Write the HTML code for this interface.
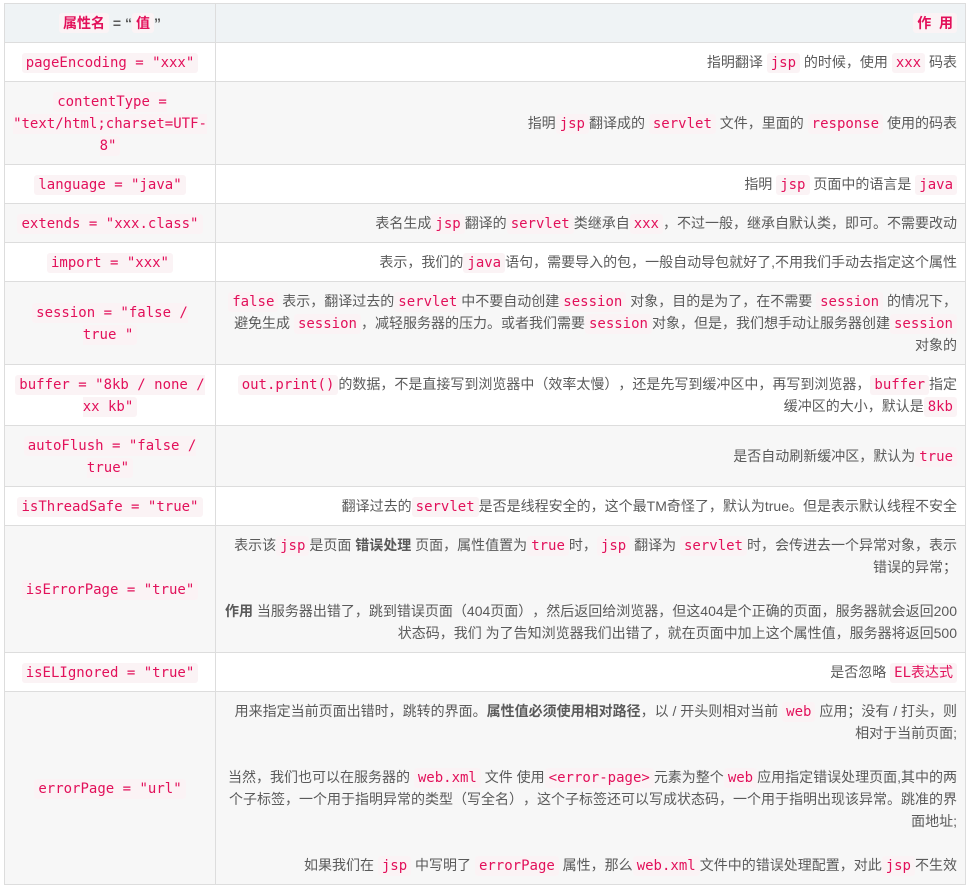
<!DOCTYPE html>
<html><head><meta charset="utf-8">
<style>
html,body{margin:0;padding:0;background:#fff;width:970px;height:887px;overflow:hidden}
body{font-family:"Liberation Sans","Noto Sans CJK SC",sans-serif;font-size:14px;line-height:22px;color:#5a5a5a;text-spacing-trim:space-all}
table{position:absolute;left:4px;top:3px;width:962px;border-collapse:collapse;table-layout:fixed}
td,th{border:1px solid #ddd;padding:8px 8px;text-align:right;font-weight:400;vertical-align:middle}
col.a{width:211px}
td:first-child,th:first-child{text-align:center;padding:8px 6px}
tr:nth-child(even) td{background:#f7f7f7}
th{background:#eff3f5;font-weight:bold}
code{font-family:"DejaVu Sans Mono","Liberation Mono","Noto Sans CJK SC",monospace;font-size:14px;line-height:0;color:#e2105a;background:#fbf3f5;padding:2px 4px;border-radius:3px}
th code{font-family:"Liberation Sans","Noto Sans CJK SC",sans-serif;font-weight:bold}
b{font-weight:bold}
</style></head><body>
<table>
<colgroup><col class="a"><col></colgroup>
<thead><tr><th><code>属性名</code> = “<code>值</code>”</th><th><code>作&nbsp;&nbsp;用</code></th></tr></thead>
<tbody>
<tr><td><code>pageEncoding = "xxx"</code></td><td>指明翻译 <code>jsp</code> 的时候，使用 <code>xxx</code> 码表</td></tr>
<tr><td><code>contentType =<br>"text/html;charset=UTF-<br>8"</code></td><td>指明<code>jsp</code>翻译成的 <code>servlet</code> 文件，里面的 <code>response</code> 使用的码表</td></tr>
<tr><td><code>language = "java"</code></td><td>指明 <code>jsp</code> 页面中的语言是 <code>java</code></td></tr>
<tr><td><code>extends = "xxx.class"</code></td><td>表名生成<code>jsp</code>翻译的<code>servlet</code>类继承自<code>xxx</code>，不过一般，继承自默认类，即可。不需要改动</td></tr>
<tr><td><code>import = "xxx"</code></td><td>表示，我们的<code>java</code>语句，需要导入的包，一般自动导包就好了,不用我们手动去指定这个属性</td></tr>
<tr><td><code>session = "false /<br>true "</code></td><td><code>false</code> 表示，翻译过去的<code>servlet</code>中不要自动创建<code>session</code> 对象，目的是为了，在不需要 <code>session</code> 的情况下，<br>避免生成 <code>session</code>，减轻服务器的压力。或者我们需要<code>session</code>对象，但是，我们想手动让服务器创建<code>session</code><br>对象的</td></tr>
<tr><td><code>buffer = "8kb / none /<br>xx kb"</code></td><td><code>out.print()</code>的数据，不是直接写到浏览器中（效率太慢），还是先写到缓冲区中，再写到浏览器，<code>buffer</code>指定<br>缓冲区的大小，默认是<code>8kb</code></td></tr>
<tr><td><code>autoFlush = "false /<br>true"</code></td><td>是否自动刷新缓冲区，默认为<code>true</code></td></tr>
<tr><td><code>isThreadSafe = "true"</code></td><td>翻译过去的<code>servlet</code>是否是线程安全的，这个最TM奇怪了，默认为true。但是表示默认线程不安全</td></tr>
<tr><td><code>isErrorPage = "true"</code></td><td>表示该<code>jsp</code>是页面 <b>错误处理</b> 页面，属性值置为<code>true</code>时，<code>jsp</code> 翻译为 <code>servlet</code>时，会传进去一个异常对象，表示<br>错误的异常；<br><br><b>作用</b> 当服务器出错了，跳到错误页面（404页面），然后返回给浏览器，但这404是个正确的页面，服务器就会返回200<br>状态码，我们 为了告知浏览器我们出错了，就在页面中加上这个属性值，服务器将返回500</td></tr>
<tr><td><code>isELIgnored = "true"</code></td><td>是否忽略 <code>EL表达式</code></td></tr>
<tr><td><code>errorPage = "url"</code></td><td>用来指定当前页面出错时，跳转的界面。<b>属性值必须使用相对路径</b>，以 / 开头则相对当前 <code>web</code> 应用；没有 / 打头，则<br>相对于当前页面;<br><br>当然，我们也可以在服务器的 <code>web.xml</code> 文件 使用<code>&lt;error-page&gt;</code>元素为整个<code>web</code>应用指定错误处理页面,其中的两<br>个子标签，一个用于指明异常的类型（写全名），这个子标签还可以写成状态码，一个用于指明出现该异常。跳准的界<br>面地址;<br><br>如果我们在 <code>jsp</code> 中写明了 <code>errorPage</code> 属性，那么<code>web.xml</code>文件中的错误处理配置，对此<code>jsp</code>不生效</td></tr>
</tbody>
</table>
</body></html>
